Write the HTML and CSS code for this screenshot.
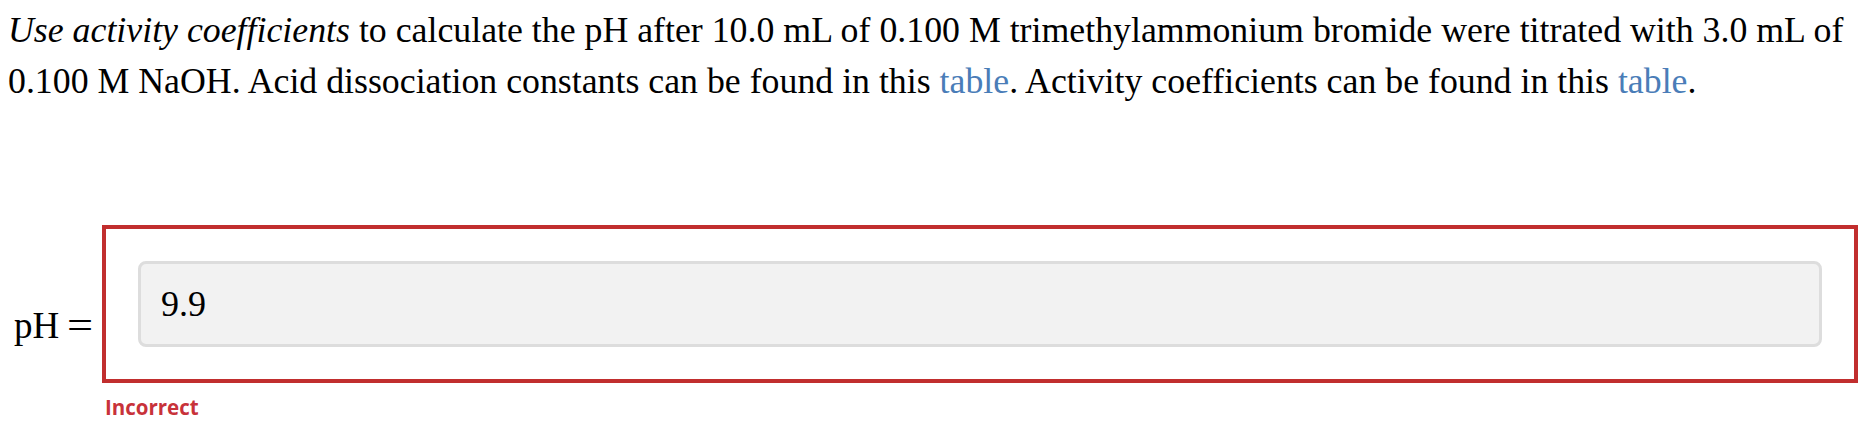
FILE: index.html
```html
<!DOCTYPE html>
<html lang="en">
<head>
<meta charset="utf-8">
<title>Question</title>
<link rel="stylesheet" href="styles.css">
</head>
<body>
<div class="question">
  <p class="prompt"><em>Use activity coefficients</em> to calculate the pH after 10.0 mL of 0.100 M trimethylammonium bromide were titrated with 3.0 mL of 0.100 M NaOH. Acid dissociation constants can be found in this <a href="#" class="link">table</a>. Activity coefficients can be found in this <a href="#" class="link">table</a>.</p>
  <div class="answer-row">
    <span class="answer-label">pH<span class="eq">=</span></span>
    <div class="answer-col">
      <div class="answer-box">
        <div class="answer-input">9.9</div>
      </div>
      <div class="feedback">Incorrect</div>
    </div>
  </div>
</div>
</body>
</html>
```
FILE: styles.css
```css
html, body {
  margin: 0;
  background: #ffffff;
}
body {
  padding: 5px 1px 0 8px;
  font-family: "Liberation Serif", "Times New Roman", serif;
  color: #000000;
}
.prompt {
  margin: 0 -8px 0 0;
  font-size: 35.8px;
  line-height: 51px;
}
.link {
  color: #4a7db8;
  text-decoration: none;
}
.answer-row {
  display: flex;
  align-items: flex-start;
  margin-top: 118px;
}
.answer-label {
  font-size: 37px;
  line-height: 40px;
  margin-top: 81px;
  padding-left: 6px;
  width: 88px;
  flex: none;
  white-space: nowrap;
}
.eq {
  display: inline-block;
  margin-left: 8px;
  transform: scaleX(1.25);
  transform-origin: left center;
}
.answer-col {
  flex: 1;
  display: flex;
  flex-direction: column;
}
.answer-box {
  border: 4px solid #c12e2e;
  padding: 32px;
}
.answer-input {
  background: #f2f2f2;
  border: 3px solid #dddddd;
  border-radius: 8px;
  height: 80px;
  box-sizing: content-box;
  padding: 0 20px;
  font-size: 36px;
  line-height: 80px;
}
.feedback {
  margin-top: 10px;
  padding-left: 3px;
  font-family: "Open Sans", sans-serif;
  font-weight: 700;
  font-size: 20.5px;
  line-height: 28px;
  color: #c8323a;
}
```
